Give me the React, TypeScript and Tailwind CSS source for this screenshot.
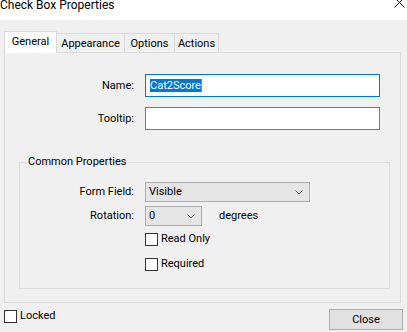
import React from "react";

function Chevron() {
  return (
    <svg width="8" height="5" viewBox="0 0 8 5" className="shrink-0">
      <path d="M0.5 0.5L4 4L7.5 0.5" fill="none" stroke="#606060" strokeWidth="1" />
    </svg>
  );
}

function CheckBox() {
  return <div className="w-[13px] h-[13px] border border-[#333333] bg-white shrink-0" />;
}

export default function App() {
  return (
    <div className="w-[407px] h-[332px] bg-[#f0f0f0] overflow-hidden font-[Roboto,sans-serif] text-[11px] text-black flex flex-col">
      {/* title bar */}
      <div className="h-[20px] bg-white flex justify-between shrink-0 overflow-hidden">
        <div className="leading-[16px] mt-[-3px] text-[12px]">Check Box Properties</div>
        <svg className="mt-[-3px] mr-[2px]" width="11" height="11" viewBox="0 0 11 11">
          <path d="M0.5 0.5L10.5 10.5M10.5 0.5L0.5 10.5" stroke="#111" strokeWidth="1" />
        </svg>
      </div>

      {/* tabs */}
      <div className="flex items-end pl-[4px] pt-[11px] shrink-0 relative z-10">
        <div className="w-[53px] h-[22px] mb-[-1px] bg-[#ffffff] border border-b-0 border-[#d9d9d9] flex justify-center pt-[3px] leading-[14px]">
          General
        </div>
        <div className="w-[68px] h-[19px] border-t border-r border-[#d9d9d9] flex justify-center pt-[3px] leading-[14px]">
          Appearance
        </div>
        <div className="w-[50px] h-[19px] border-t border-r border-[#d9d9d9] flex justify-center pt-[3px] leading-[14px]">
          Options
        </div>
        <div className="w-[44px] h-[19px] border-t border-r border-[#d9d9d9] flex justify-center pt-[3px] leading-[14px]">
          Actions
        </div>
      </div>

      {/* panel */}
      <div className="ml-[4px] w-[397px] h-[251px] border border-[#d9d9d9] flex flex-col shrink-0">
        <div className="flex items-center mt-[21px]">
          <div className="w-[129px] text-right leading-[16px]">Name:</div>
          <div className="ml-[11px] w-[235px] h-[23px] border border-[#0078d7] bg-white flex items-center pl-[4px]">
            <span className="bg-[#0078d7] text-white leading-[13px] h-[13px] border-r border-[#e07020]">Cat2Score</span>
          </div>
        </div>
        <div className="flex items-center mt-[10px]">
          <div className="w-[129px] text-right leading-[16px]">Tooltip:</div>
          <div className="ml-[11px] w-[235px] h-[23px] border border-[#7a7a7a] bg-white" />
        </div>

        <fieldset className="ml-[14px] mt-[24px] w-[371px] h-[135px] border border-[#dcdcdc] flex flex-col">
          <legend className="ml-[6px] px-[2px] leading-[16px]">Common Properties</legend>
          <div className="flex items-center mt-[12px]">
            <div className="w-[114px] text-right leading-[16px]">Form Field:</div>
            <div className="ml-[11px] w-[165px] h-[20px] border border-[#adadad] bg-[#e5e5e5] flex items-center justify-between pl-[3px] pr-[6px] leading-[16px]">
              <span>Visible</span>
              <Chevron />
            </div>
          </div>
          <div className="flex items-center mt-[4px]">
            <div className="w-[114px] text-right leading-[16px]">Rotation:</div>
            <div className="ml-[11px] w-[57px] h-[20px] border border-[#adadad] bg-[#e5e5e5] flex items-center justify-between pl-[3px] pr-[6px] leading-[16px]">
              <span>0</span>
              <Chevron />
            </div>
            <div className="ml-[17px] leading-[16px]">degrees</div>
          </div>
          <div className="flex items-center ml-[125px] mt-[5px]">
            <CheckBox />
            <span className="ml-[3px] leading-[16px]">Read Only</span>
          </div>
          <div className="flex items-center ml-[125px] mt-[9px]">
            <CheckBox />
            <span className="ml-[3px] leading-[16px]">Required</span>
          </div>
        </fieldset>
      </div>

      {/* bottom */}
      <div className="flex justify-between items-start">
        <div className="flex items-center ml-[4px] mt-[5px]">
          <CheckBox />
          <span className="ml-[3px] leading-[16px]">Locked</span>
        </div>
        <div className="mt-[6px] mr-[4px] w-[74px] h-[21px] border border-[#adadad] bg-[#e1e1e1] flex items-center justify-center leading-[16px]">
          Close
        </div>
      </div>
    </div>
  );
}
